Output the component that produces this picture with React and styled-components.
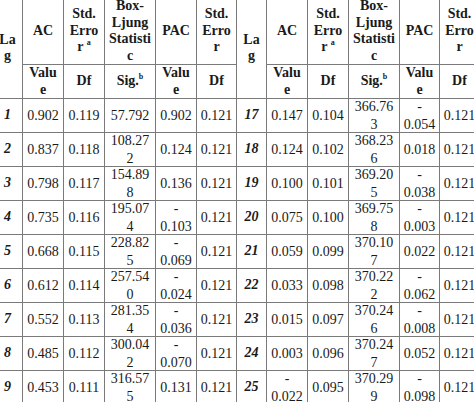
import styled, { createGlobalStyle } from "styled-components";

const left = [
  ["1", "0.902", "0.119", "57.792", "0.902", "0.121"],
  ["2", "0.837", "0.118", "108.272", "0.124", "0.121"],
  ["3", "0.798", "0.117", "154.898", "0.136", "0.121"],
  ["4", "0.735", "0.116", "195.074", "-0.103", "0.121"],
  ["5", "0.668", "0.115", "228.825", "-0.069", "0.121"],
  ["6", "0.612", "0.114", "257.540", "-0.024", "0.121"],
  ["7", "0.552", "0.113", "281.354", "-0.036", "0.121"],
  ["8", "0.485", "0.112", "300.042", "-0.070", "0.121"],
  ["9", "0.453", "0.111", "316.575", "0.131", "0.121"],
];

const right = [
  ["17", "0.147", "0.104", "366.763", "-0.054", "0.121"],
  ["18", "0.124", "0.102", "368.236", "0.018", "0.121"],
  ["19", "0.100", "0.101", "369.205", "-0.038", "0.121"],
  ["20", "0.075", "0.100", "369.758", "-0.003", "0.121"],
  ["21", "0.059", "0.099", "370.107", "0.022", "0.121"],
  ["22", "0.033", "0.098", "370.222", "-0.062", "0.121"],
  ["23", "0.015", "0.097", "370.246", "-0.008", "0.121"],
  ["24", "0.003", "0.096", "370.247", "0.052", "0.121"],
  ["25", "-0.022", "0.095", "370.299", "-0.098", "0.121"],
];

const widths = [30, 41, 41, 51, 41, 40, 30, 41, 41, 51, 40, 40];

// the narrow columns of the source wrap numbers the way the PDF did
function wrap(v) {
  if (v.startsWith("-")) return ["-", v.slice(1)];
  if (v.length > 6) return [v.slice(0, 6), v.slice(6)];
  return [v];
}

function Lines({ lines }) {
  return lines.map((l, i) => (
    <span key={i}>
      {i > 0 && <br />}
      {l}
    </span>
  ));
}

function HeadTop() {
  return (
    <>
      <Th rowSpan={2}>
        <Lines lines={["La", "g"]} />
      </Th>
      <Th>AC</Th>
      <Th>
        Std.
        <br />
        Erro
        <br />r <Sup>a</Sup>
      </Th>
      <Th>
        <Lines lines={["Box-", "Ljung", "Statisti", "c"]} />
      </Th>
      <Th>PAC</Th>
      <Th>
        <Lines lines={["Std.", "Erro", "r"]} />
      </Th>
    </>
  );
}

function HeadSub() {
  return (
    <>
      <Th>
        <Lines lines={["Valu", "e"]} />
      </Th>
      <Th>Df</Th>
      <Th>
        Sig.<Sup>b</Sup>
      </Th>
      <Th>
        <Lines lines={["Valu", "e"]} />
      </Th>
      <Th>Df</Th>
    </>
  );
}

function Half({ row }) {
  return (
    <>
      <LagCell>{row[0]}</LagCell>
      {row.slice(1).map((v, i) => (
        <Td key={i}>
          <Value>
            <Lines lines={wrap(v)} />
          </Value>
        </Td>
      ))}
    </>
  );
}

export default function App() {
  return (
    <Page>
      <GlobalStyle />
      <Table>
        <colgroup>
          {widths.map((w, i) => (
            <col key={i} style={{ width: w }} />
          ))}
        </colgroup>
        <thead>
          <TopRow>
            <HeadTop />
            <HeadTop />
          </TopRow>
          <Row>
            <HeadSub />
            <HeadSub />
          </Row>
        </thead>
        <tbody>
          {left.map((r, i) => (
            <Row key={r[0]}>
              <Half row={r} />
              <Half row={right[i]} />
            </Row>
          ))}
        </tbody>
      </Table>
    </Page>
  );
}

const GlobalStyle = createGlobalStyle`
  html, body {
    margin: 0;
    padding: 0;
    background: #fff;
    overflow: hidden;
  }
`;

const Page = styled.div`
  width: 474px;
  height: 402px;
  overflow: hidden;
  background: #fff;
`;

const Table = styled.table`
  margin: -3px 0 0 -8px;
  border-collapse: collapse;
  table-layout: fixed;
  width: 487px;
  font-family: "Liberation Serif", "Times New Roman", serif;
  font-size: 14px;
  line-height: 16.5px;
  color: #1a1a1a;
`;

const TopRow = styled.tr`
  height: 66px;
`;

const Row = styled.tr`
  height: 34px;
`;

const Th = styled.th`
  border: 1px solid #7a7a7a;
  padding: 0 1px;
  text-align: center;
  vertical-align: middle;
  font-weight: bold;
  overflow: hidden;
  white-space: nowrap;
`;

const Td = styled.td`
  border: 1px solid #7a7a7a;
  padding: 0 1px;
  text-align: center;
  vertical-align: middle;
  white-space: nowrap;
`;

// wrapped numbers sit a little looser than the row allows
const Value = styled.div`
  line-height: 18px;
  margin: -2px 0;
`;

const LagCell = styled(Td)`
  font-weight: bold;
  font-style: italic;
`;

const Sup = styled.sup`
  font-size: 8px;
  line-height: 0;
  vertical-align: 6px;
`;
